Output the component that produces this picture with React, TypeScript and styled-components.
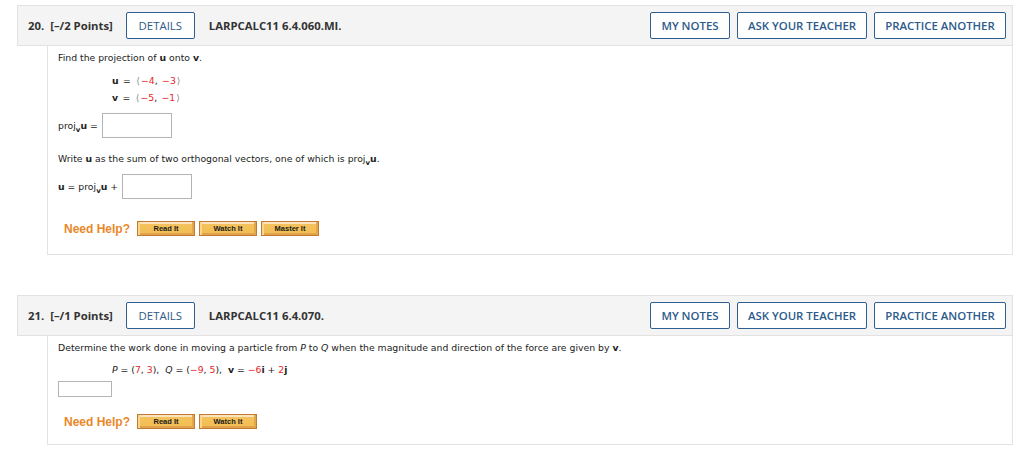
import React from "react";
import styled, { createGlobalStyle } from "styled-components";

const Global = createGlobalStyle`
  html, body { margin: 0; padding: 0; background: #ffffff; }
  body { font-family: "DejaVu Sans", Verdana, sans-serif; color: #222; }
`;

const Page = styled.div`
  padding: 5px 11px 0 17px;
  width: 996px;
  display: flex;
  flex-direction: column;
  gap: 40px;
`;

const Card = styled.section`
  display: flex;
  flex-direction: column;
`;

const Header = styled.header`
  height: 41px;
  box-sizing: border-box;
  background: #f4f4f4;
  border: 1px solid #e2e2e2;
  display: flex;
  align-items: center;
  padding: 0 6px 0 10px;
  font-family: "Open Sans", "Noto Sans", sans-serif;
  color: #333;
`;

const Number = styled.span`
  font-weight: 700;
  font-size: 11.3px;
  margin-right: 6px;
`;

const Points = styled.span`
  font-weight: 700;
  font-size: 11.3px;
  margin-right: 13px;
`;

const Title = styled.span`
  font-weight: 700;
  font-size: 11.3px;
  margin-left: 14px;
  color: #333;
`;

const Spacer = styled.div`
  flex: 1;
`;

const HeaderButtons = styled.div`
  display: flex;
  gap: 7px;
`;

const OutlineButton = styled.button<{ $w: number; $light?: boolean }>`
  width: ${(p) => p.$w}px;
  height: 27px;
  box-sizing: border-box;
  border: 1px solid #2f5f8f;
  border-radius: 2px;
  background: #ffffff;
  color: #2d5b8b;
  font-family: "Open Sans", "Noto Sans", sans-serif;
  font-size: 11.4px;
  font-weight: ${(p) => (p.$light ? 400 : 600)};
  padding: 0;
  display: flex;
  align-items: center;
  justify-content: center;
`;

const Body = styled.div<{ $h: number }>`
  margin-left: 30px;
  height: ${(p) => p.$h}px;
  box-sizing: border-box;
  border-left: 1px solid #e3e3e3;
  border-right: 1px solid #e3e3e3;
  border-bottom: 1px solid #e3e3e3;
  padding: 6px 0 0 10px;
  display: flex;
  flex-direction: column;
  font-size: 9.3px;
  color: #222;
`;

const Line = styled.div<{ $mt?: number; $indent?: number }>`
  margin-top: ${(p) => p.$mt ?? 0}px;
  margin-left: ${(p) => p.$indent ?? 0}px;
  line-height: 12px;
  white-space: nowrap;
  display: flex;
  align-items: center;
  gap: 4px;
`;

const Eq = styled.span<{ $ws?: number }>`
  word-spacing: ${(p) => p.$ws ?? 0}px;
`;

const B = styled.b`
  font-weight: 700;
`;

const Red = styled.span`
  color: #e8251f;
`;

const Gray = styled.span`
  color: #8a8a8a;
  margin: 0 1px;
`;

const I = styled.i`
  font-style: italic;
`;

const Sub = styled.sub`
  font-size: 7px;
  font-weight: 700;
  vertical-align: -3px;
  line-height: 0;
`;

const AnswerBox = styled.div<{ $w: number; $h: number }>`
  width: ${(p) => p.$w}px;
  height: ${(p) => p.$h}px;
  box-sizing: border-box;
  border: 1px solid #b4b4b4;
  background: #fff;
`;

const Help = styled.div<{ $mt: number }>`
  margin-top: ${(p) => p.$mt}px;
  margin-left: 6px;
  display: flex;
  align-items: center;
  gap: 4px;
`;

const HelpLabel = styled.span`
  font-family: "Liberation Sans", Arial, sans-serif;
  font-weight: 700;
  font-size: 12px;
  color: #e8882a;
  margin-right: 3px;
`;

const HelpButton = styled.button`
  width: 58px;
  height: 15px;
  box-sizing: border-box;
  padding: 0;
  border: 1px solid #c07a34;
  background: linear-gradient(#fbe4bd 0, #fbe4bd 2px, #f4c25c 2px, #f2be55 calc(100% - 2px), #e0a24a calc(100% - 2px));
  box-shadow: inset 2px 0 0 #f9d68e, inset -2px 0 0 #e3a84a;
  font-family: "Liberation Sans", Arial, sans-serif;
  font-weight: 700;
  font-size: 7.5px;
  color: #1a1a1a;
  display: flex;
  align-items: center;
  justify-content: center;
`;

const ProjV = () => (
  <span>
    proj<Sub>v</Sub>
    <B>u</B>
  </span>
);

const HeaderRow = ({ num, pts, title }: { num: string; pts: string; title: string }) => (
  <Header>
    <Number>{num}</Number>
    <Points>{pts}</Points>
    <OutlineButton $w={69} $light>
      DETAILS
    </OutlineButton>
    <Title>{title}</Title>
    <Spacer />
    <HeaderButtons>
      <OutlineButton $w={80}>MY NOTES</OutlineButton>
      <OutlineButton $w={130}>ASK YOUR TEACHER</OutlineButton>
      <OutlineButton $w={132}>PRACTICE ANOTHER</OutlineButton>
    </HeaderButtons>
  </Header>
);

export default function App() {
  return (
    <>
      <Global />
      <Page>
        <Card>
          <HeaderRow num="20." pts="[–/2 Points]" title="LARPCALC11 6.4.060.MI." />
          <Body $h={209}>
            <Line>
              <span>
                Find the projection of <B>u</B> onto <B>v</B>.
              </span>
            </Line>
            <Line $mt={11} $indent={54}>
              <Eq $ws={1.5}>
                <B>u</B> = <Gray>⟨</Gray>
                <Red>−4</Red>, <Red>−3</Red>
                <Gray>⟩</Gray>
              </Eq>
            </Line>
            <Line $mt={5} $indent={54}>
              <Eq $ws={1.5}>
                <B>v</B> = <Gray>⟨</Gray>
                <Red>−5</Red>, <Red>−1</Red>
                <Gray>⟩</Gray>
              </Eq>
            </Line>
            <Line $mt={9}>
              <span>
                <ProjV /> =
              </span>
              <AnswerBox $w={70} $h={25} />
            </Line>
            <Line $mt={15}>
              <span>
                Write <B>u</B> as the sum of two orthogonal vectors, one of which is <ProjV />.
              </span>
            </Line>
            <Line $mt={9}>
              <span>
                <B>u</B> = <ProjV /> +
              </span>
              <AnswerBox $w={70} $h={25} />
            </Line>
            <Help $mt={22}>
              <HelpLabel>Need Help?</HelpLabel>
              <HelpButton>Read It</HelpButton>
              <HelpButton>Watch It</HelpButton>
              <HelpButton>Master It</HelpButton>
            </Help>
          </Body>
        </Card>
        <Card>
          <HeaderRow num="21." pts="[–/1 Points]" title="LARPCALC11 6.4.070." />
          <Body $h={109}>
            <Line>
              <span>
                Determine the work done in moving a particle from <I>P</I> to <I>Q</I> when the magnitude
                and direction of the force are given by <B>v</B>.
              </span>
            </Line>
            <Line $mt={10} $indent={54}>
              <Eq>
                <I>P</I> = (<Red>7</Red>, <Red>3</Red>), &nbsp;<I>Q</I> = (<Red>−9</Red>, <Red>5</Red>), &nbsp;
                <B>v</B> = <Red>−6</Red>
                <B>i</B> + <Red>2</Red>
                <B>j</B>
              </Eq>
            </Line>
            <Line $mt={5}>
              <AnswerBox $w={54} $h={16} />
            </Line>
            <Help $mt={17}>
              <HelpLabel>Need Help?</HelpLabel>
              <HelpButton>Read It</HelpButton>
              <HelpButton>Watch It</HelpButton>
            </Help>
          </Body>
        </Card>
      </Page>
    </>
  );
}
